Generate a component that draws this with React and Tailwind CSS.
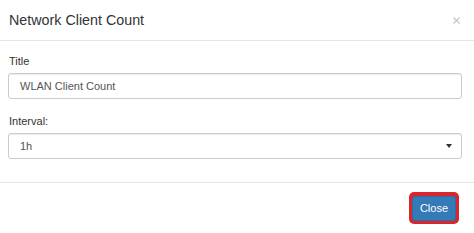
import { X } from 'lucide-react';

export default function App() {
  return (
    <div className="w-[474px] h-[233px] bg-white text-[#333] overflow-hidden"
      style={{ fontFamily: '"Liberation Sans", Arial, sans-serif' }}>
      {/* Encabezado */}
      <div className="h-[41px] flex items-center justify-between pl-[9px] pr-[12px] border-b border-[#e5e5e5]">
        <h4 className="text-[14.3px] leading-[20px]">Network Client Count</h4>
        <button className="text-[#c4c4c4] leading-none">
          <X size={11} strokeWidth={2.5} />
        </button>
      </div>

      {/* Formulario */}
      <div className="pl-[8px] pr-[12px] pt-[12px] pb-[23px] border-b border-[#e5e5e5] text-[11px]">
        <div className="mb-[14px]">
          <label className="block mb-[4px] pl-px leading-[16px]">Title</label>
          <div className="h-[26px] flex items-center px-[11px] border border-[#ccc] rounded-[3px]
                          shadow-[inset_0_1px_1px_rgba(0,0,0,0.075)] text-[#555]">
            WLAN Client Count
          </div>
        </div>
        <div>
          <label className="block mb-[4px] pl-px leading-[16px]">Interval:</label>
          <div className="h-[26px] flex items-center justify-between pl-[11px] pr-[9px] border border-[#ccc] rounded-[3px]
                          shadow-[inset_0_1px_1px_rgba(0,0,0,0.075)] text-[#555]">
            <span>1h</span>
            <span className="w-0 h-0 border-x-[3.5px] border-x-transparent border-t-[4px] border-t-[#333]" />
          </div>
        </div>
      </div>

      {/* Pie */}
      <div className="flex justify-end pr-[15px] pt-[9px]">
        <div className="p-[3px] rounded-[5px] bg-[#d7262c]">
          <button className="h-[25px] px-[7px] rounded-[3px] bg-[#337ab7] border border-[#2e6da4]
                             text-white text-[11px] leading-none">
            Close
          </button>
        </div>
      </div>
    </div>
  );
}
